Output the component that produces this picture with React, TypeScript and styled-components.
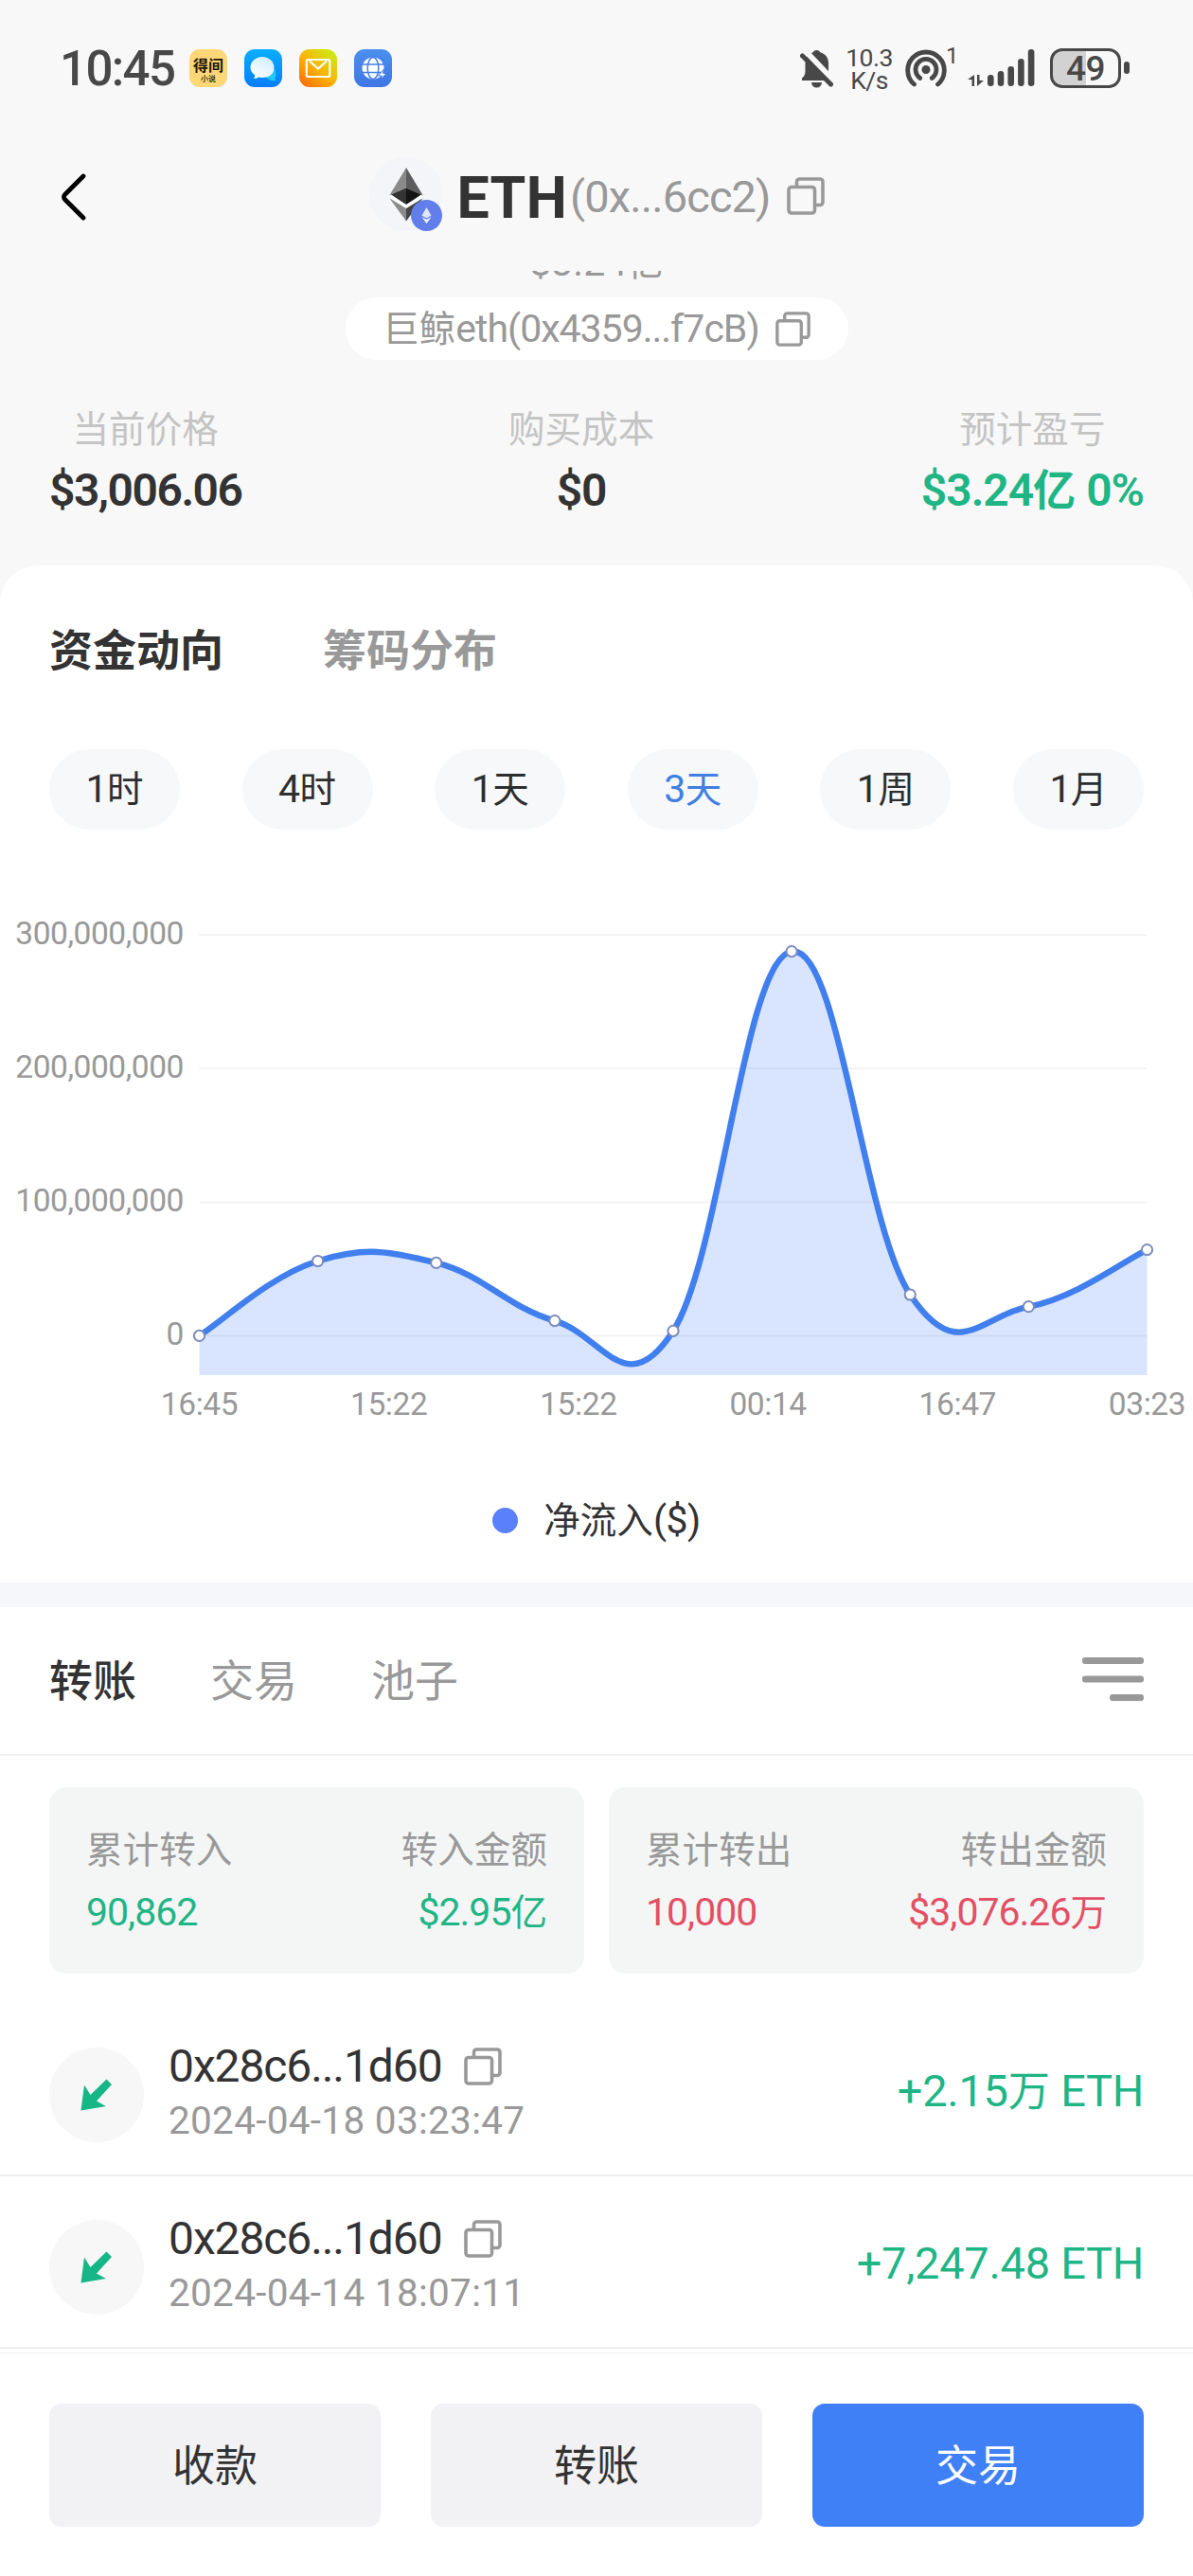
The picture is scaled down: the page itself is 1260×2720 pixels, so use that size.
import React from "react";
import styled, { createGlobalStyle } from "styled-components";

const GlobalStyle = createGlobalStyle`
  * { box-sizing: border-box; }
  body {
    margin: 0;
    background: #f8f8f8;
    font-family: Roboto, "Noto Sans CJK SC", sans-serif;
    color: #333;
    -webkit-font-smoothing: antialiased;
  }
`;

const Screen = styled.div`
  width: 1260px;
  height: 2720px;
  overflow: hidden;
  display: flex;
  flex-direction: column;
`;

interface TextProps {
  $size: number;
  $color?: string;
  $weight?: number;
  $track?: number;
}

const Text = styled.span<TextProps>`
  font-size: ${(p) => p.$size}px;
  line-height: 1.2;
  color: ${(p) => p.$color ?? "#333"};
  font-weight: ${(p) => p.$weight ?? 400};
  letter-spacing: ${(p) => p.$track ?? 0}px;
  white-space: nowrap;
`;

const Han = styled.span`
  font-size: 0.94em;
  line-height: 1;
  letter-spacing: 0;
`;

/* Status bar */

const StatusBar = styled.div`
  flex: none;
  height: 143px;
  padding: 0 67px 0 63px;
  display: flex;
  align-items: center;
  justify-content: space-between;
`;

const StatusGroup = styled.div<{ $gap: number }>`
  display: flex;
  align-items: center;
  gap: ${(p) => p.$gap}px;
`;

const Clock = styled(Text)`
  width: 119px;
  padding-top: 3px;
`;

const AppBadge = styled.div`
  width: 40px;
  height: 40px;
  border-radius: 11px;
  background: #ffd777;
  display: flex;
  flex-direction: column;
  align-items: center;
  padding-top: 8px;
  color: #1d1503;
  font-family: "Noto Sans CJK SC", sans-serif;
`;

const BadgeTitle = styled.span`
  font-size: 16px;
  font-weight: 700;
  line-height: 17px;
`;

const BadgeSub = styled.span`
  font-size: 8px;
  font-weight: 500;
  line-height: 11px;
`;

const Speed = styled.div`
  width: 50px;
  display: flex;
  flex-direction: column;
  align-items: center;
  font-size: 26.500px;
  letter-spacing: -0.5px;
  line-height: 24px;
  color: #484848;
  margin: 2px 13px 0 12px;
`;

const HotspotCount = styled.span`
  font-size: 24px;
  line-height: 24px;
  color: #484848;
  align-self: flex-start;
  margin: 0 14px 0 -1px;
  width: 9px;
`;

const Battery = styled.div`
  width: 75px;
  height: 42px;
  border: 3.5px solid #484848;
  border-radius: 13px;
  background: linear-gradient(90deg, #d2d2d2 51%, #f8f8f8 51%);
  display: flex;
  align-items: center;
  justify-content: center;
  font-size: 37px;
  letter-spacing: -0.5px;
  line-height: 36px;
  font-weight: 500;
  color: #484848;
  margin-left: 15px;
  padding-top: 3px;
`;

const BatteryNub = styled.div`
  width: 6px;
  height: 13px;
  border-radius: 3px;
  background: #484848;
  margin-left: 3px;
`;

/* Header */

const Header = styled.header`
  flex: none;
  height: 143px;
  padding: 0 63px 13px;
  display: grid;
  grid-template-columns: 1fr auto 1fr;
  align-items: center;
`;

const TokenTitle = styled.div`
  display: flex;
  align-items: center;
`;

const TokenName = styled(Text)`
  margin: 4px 3px 0 11px;
`;

const TokenIcon = styled.svg`
  margin-top: -7px;
`;

const TitleCopy = styled.div`
  display: flex;
  margin-left: 17px;
  margin-top: -3px;
`;

const ScrolledTotal = styled.div`
  flex: none;
  height: 12px;
  overflow: hidden;
  display: flex;
  justify-content: center;
  align-items: flex-end;
  margin-bottom: 16px;
`;

const TotalText = styled(Text)`
  line-height: 1;
`;

const AddressPill = styled.div`
  flex: none;
  align-self: center;
  width: 531px;
  height: 66px;
  border-radius: 33px;
  background: #fff;
  display: flex;
  align-items: center;
  justify-content: center;
  gap: 17px;
  padding-top: 1px;
`;

const Stats = styled.section`
  flex: none;
  height: 217px;
  padding: 44px 52px 0;
  display: flex;
  justify-content: space-between;
`;

const Stat = styled.div`
  display: flex;
  flex-direction: column;
  align-items: center;
`;

const StatLabel = styled.span`
  font-size: 38.6px;
  line-height: 60px;
  color: #c4c4c4;
`;

const StatValue = styled(Text)`
  line-height: 68px;
`;

/* Flow panel */

const Panel = styled.section`
  flex: none;
  height: 1074px;
  background: #fff;
  border-radius: 40px 40px 0 0;
  display: flex;
  flex-direction: column;
`;

const SectionTabs = styled.nav`
  display: flex;
  gap: 105px;
  padding: 55px 52px 0;
`;

const SectionTab = styled.span<{ $active?: boolean }>`
  font-size: 46px;
  line-height: 70px;
  font-weight: 700;
  color: ${(p) => (p.$active ? "#333" : "#999")};
`;

const Ranges = styled.div`
  display: flex;
  justify-content: space-between;
  padding: 0 52px;
  margin-top: 69px;
`;

const Range = styled.button<{ $active?: boolean }>`
  width: 138px;
  height: 85px;
  border: 0;
  padding: 0;
  border-radius: 43px;
  background: #f6f8fa;
  font: 400 41px/85px Roboto, "Noto Sans CJK SC", sans-serif;
  letter-spacing: -0.5px;
  color: ${(p) => (p.$active ? "#417fe0" : "#2e2e2e")};
`;

const Chart = styled.svg`
  display: block;
  margin-top: 54px;
  text {
    font-family: Roboto, sans-serif;
    font-size: 33.5px;
    fill: #999;
  }
`;

const Legend = styled.div`
  display: flex;
  justify-content: center;
  align-items: center;
  gap: 27px;
  margin-top: 71px;
`;

const LegendDot = styled.span`
  width: 27px;
  height: 27px;
  border-radius: 50%;
  background: #5b80fb;
`;

/* Transfers */

const Divider = styled.div`
  flex: none;
  height: 26px;
  background: #f6f7fb;
`;

const Records = styled.section`
  flex: 1;
  background: #fff;
`;

const RecordHeader = styled.div`
  height: 157px;
  padding: 0 52px;
  display: flex;
  align-items: center;
  justify-content: space-between;
  border-bottom: 2px solid #f0f0f0;
`;

const RecordTabs = styled.nav`
  display: flex;
  gap: 78px;
`;

const RecordTab = styled.span<{ $active?: boolean }>`
  font-size: 46px;
  line-height: 60px;
  font-weight: ${(p) => (p.$active ? 500 : 400)};
  color: ${(p) => (p.$active ? "#333" : "#999")};
`;

const FilterButton = styled.div`
  display: flex;
  padding-bottom: 3px;
`;

const Totals = styled.div`
  display: flex;
  gap: 26px;
  padding: 33px 52px 0;
  margin-bottom: 32px;
`;

const TotalCard = styled.div`
  flex: 1;
  height: 197px;
  border-radius: 18px;
  background: #f4f6f6;
  padding: 35px 39px 0;
  display: flex;
  justify-content: space-between;
`;

const TotalCell = styled.div<{ $end?: boolean }>`
  display: flex;
  flex-direction: column;
  align-items: ${(p) => (p.$end ? "flex-end" : "flex-start")};
`;

const TotalLabel = styled.span`
  font-size: 38.6px;
  line-height: 64px;
  color: #999;
`;

const TotalValue = styled(Text)`
  line-height: 67px;
`;

const TransferRow = styled.div`
  height: 182px;
  padding: 11px 52px 0;
  display: flex;
  align-items: center;
  border-bottom: 2px solid #eee;
`;

const DirectionIcon = styled.div`
  width: 100px;
  height: 100px;
  border-radius: 50%;
  background: #f7f7f7;
  display: flex;
  align-items: center;
  justify-content: center;
  margin-right: 26px;
`;

const TransferInfo = styled.div`
  flex: 1;
  display: flex;
  flex-direction: column;
  margin-top: -6px;
`;

const AddressLine = styled.div`
  display: flex;
  align-items: center;
  gap: 23px;
  height: 57px;
  margin-bottom: 4px;
`;

const Amount = styled(Text)`
  margin-top: -7px;
`;

/* Bottom actions */

const ActionBar = styled.footer`
  flex: none;
  height: 237px;
  border-top: 3px solid #f8f8f8;
  background: #fff;
  padding: 52px 52px 0;
  display: flex;
  gap: 53px;
`;

const Action = styled.button<{ $primary?: boolean }>`
  flex: 1;
  height: 130px;
  border: 0;
  border-radius: 13px;
  padding: 0 0 6px;
  background: ${(p) => (p.$primary ? "#4080f6" : "#f2f2f4")};
  color: ${(p) => (p.$primary ? "#fff" : "#333")};
  font: 400 45px/1 "Noto Sans CJK SC", sans-serif;
`;

const CopyIcon = ({ size = 40, width = 3.6 }: { size?: number; width?: number }) => (
  <svg width={size} height={size} viewBox="0 0 40 40" fill="none" stroke="#999" strokeWidth={width}>
    <rect x="2" y="10.5" width="27.5" height="27.5" rx="3" />
    <path d="M10.500 10V5a3 3 0 0 1 3-3H35a3 3 0 0 1 3 3v21.500a3 3 0 0 1-3 3h-5" />
  </svg>
);

const BackIcon = () => (
  <svg width="28" height="50" viewBox="0 0 28 50" fill="none" stroke="#000" strokeWidth="4.8" strokeLinecap="round" strokeLinejoin="round">
    <path d="M25 3 5.500 22.500Q3.500 25 5.500 27.500L25 47" />
  </svg>
);

const EthIcon = () => (
  <TokenIcon width="82" height="80" viewBox="0 0 82 80">
    <circle cx="40" cy="40" r="39" fill="#f3f5f9" />
    <path d="M40 12 22.500 41 40 33.500z" fill="#8a8a8a" />
    <path d="M40 12 57.500 41 40 33.500z" fill="#5c5c5c" />
    <path d="M22.500 41 40 33.500V51z" fill="#343434" />
    <path d="M57.500 41 40 33.500V51z" fill="#151515" />
    <path d="M22.500 44.500 40 55v13.500z" fill="#8a8a8a" />
    <path d="M57.500 44.500 40 55v13.500z" fill="#454545" />
    <path d="M23 41.500 40 53l17-11.500" fill="none" stroke="#fff" strokeWidth="3" />
    <circle cx="61.500" cy="62.500" r="16.500" fill="#627eea" />
    <path d="M61.500 54 56.500 62.500 61.500 65.500 66.500 62.500z" fill="#dfe5fb" />
    <path d="M56.500 64 61.500 71 66.500 64 61.500 67z" fill="#fff" />
  </TokenIcon>
);

const MessageBadge = () => (
  <svg width="40" height="40" viewBox="0 0 40 40">
    <defs>
      <linearGradient id="msg" x1="0" y1="0" x2="0" y2="1">
        <stop offset="0" stopColor="#0aaefc" />
        <stop offset="1" stopColor="#077dfb" />
      </linearGradient>
      <linearGradient id="bubble" x1="0" y1="1" x2="0.6" y2="0">
        <stop offset="0" stopColor="#fff" />
        <stop offset="1" stopColor="#d5efff" />
      </linearGradient>
    </defs>
    <rect width="40" height="40" rx="11" fill="url(#msg)" />
    <path d="M22 28c5 0 9-3 10-8 1.500 4 2 8 .5 11l.5 2c-4 1-9-1-11-5z" fill="#20c8f8" />
    <path d="M19 8c7 0 12.500 5 12.500 11.500S26 30 19 30c-1.500 0-3-.2-4-.5-1.500 1.200-3.500 1.500-5 1.500 1-1.200 1.300-2.500 1-4C8 25 6.500 22.500 6.500 19 6.500 13 12 8 19 8z" fill="url(#bubble)" />
  </svg>
);

const MailBadge = () => (
  <svg width="40" height="40" viewBox="0 0 40 40">
    <defs>
      <linearGradient id="mail" x1="0.1" y1="1" x2="0.9" y2="0">
        <stop offset="0" stopColor="#ff6a00" />
        <stop offset="0.45" stopColor="#fdb004" />
        <stop offset="1" stopColor="#c8f016" />
      </linearGradient>
    </defs>
    <rect width="40" height="40" rx="11" fill="url(#mail)" />
    <rect x="7.800" y="11" width="24.500" height="18" rx="1.500" fill="none" stroke="#fff" strokeWidth="2.200" />
    <path d="M11 12.500 20 20.500l9-8" fill="none" stroke="#fff" strokeWidth="2.200" />
  </svg>
);

const GlobeBadge = () => (
  <svg width="40" height="40" viewBox="0 0 40 40">
    <defs>
      <linearGradient id="globe" x1="0" y1="0" x2="0" y2="1">
        <stop offset="0" stopColor="#4a90ee" />
        <stop offset="1" stopColor="#3f76e4" />
      </linearGradient>
    </defs>
    <rect width="40" height="40" rx="11" fill="url(#globe)" />
    <circle cx="20" cy="20" r="11.500" fill="#fff" />
    <g fill="none" stroke="#447fe8" strokeWidth="1.500">
      <ellipse cx="20" cy="20" rx="5.800" ry="11.500" />
      <path d="M8 16h24M8 24.500h24" />
    </g>
    <path d="M31.500 21l-6 7h4l-1.500 4 6-6.500h-3.500z" fill="#fff" stroke="#447fe8" strokeWidth="1" />
  </svg>
);

const MutedBell = () => (
  <svg width="36" height="42" viewBox="0 0 36 42">
    <path d="M17.500 2c1.500 0 3 .8 3.800 2.300C27 6 30 10 30 16v8c0 3 1 5 3.500 8v2H2v-2.500c2.500-2 3.500-4 3.500-7.500v-8C5.500 10 8.500 6 13.700 4.300 14.500 2.800 16 2 17.500 2z" fill="#484848" />
    <path d="M12 36h11a5.500 5.500 0 0 1-11 0z" fill="#484848" />
    <path d="M3.500 0.500 36 35" stroke="#f8f8f8" strokeWidth="6" />
    <path d="M0 0h8L4 12 0 14z" fill="#f8f8f8" />
    <path d="M2.500 8 32.500 38" stroke="#484848" strokeWidth="5" strokeLinecap="round" />
  </svg>
);

const Hotspot = () => (
  <svg width="44" height="42" viewBox="0 0 44 42" fill="none" stroke="#484848" strokeWidth="4.800" strokeLinecap="round">
    <circle cx="22" cy="22.500" r="4.500" fill="#484848" stroke="none" />
    <path d="M9.500 38A19.300 19.300 0 1 1 34.500 38" />
    <path d="M15.800 31.500A11 11 0 1 1 28.200 31.500" />
  </svg>
);

const BAR_TOPS = [28, 24, 19, 11, 1];

const Signal = () => (
  <svg width="72" height="41" viewBox="0 0 72 41" fill="#484848">
    <path d="M7 28v12H4.500v-7H0zM10 28h2.500v6H17l-7 6z" />
    {BAR_TOPS.map((top, i) => (
      <rect key={i} x={21 + i * 10.7} y={top} width="6.600" height={40 - top} rx="3.200" />
    ))}
  </svg>
);

const FilterIcon = () => (
  <svg width="65" height="46" viewBox="0 0 65 46" fill="#999">
    <rect width="65" height="7" rx="3" />
    <rect y="19.500" width="65" height="7" rx="3" />
    <rect x="29" y="39" width="36" height="7" rx="3" />
  </svg>
);

const InArrow = () => (
  <svg width="34" height="34" viewBox="0 0 34 34" fill="#17b686">
    <path d="M27.500 0.500 33 6 17 23.500 27 29 0.500 33.500 4 6.500 10.500 17z" />
  </svg>
);

/* Chart geometry */

interface Point {
  x: number;
  y: number;
}

const CHART_TOP = 930;
const PLOT_LEFT = 210.5;
const PLOT_RIGHT = 1211.5;
const PLOT_BOTTOM = 1452 - CHART_TOP;
const TENSION = 0.2;

const LEVELS = [1410.4, 1331.5, 1333.4, 1394.6, 1405.3, 1004.6, 1367, 1379.7, 1319.6];
const POINTS: Point[] = LEVELS.map((y, i) => ({
  x: PLOT_LEFT + ((PLOT_RIGHT - PLOT_LEFT) / (LEVELS.length - 1)) * i,
  y: y - CHART_TOP,
}));

const Y_TICKS = [
  { label: "300,000,000", y: 57.3 },
  { label: "200,000,000", y: 198.3 },
  { label: "100,000,000", y: 339.4 },
  { label: "0", y: 480.4 },
];
const X_TICKS = ["16:45", "15:22", "15:22", "00:14", "16:47", "03:23"];

const curve = (pts: Point[]): string => {
  const at = (i: number) => pts[Math.max(0, Math.min(pts.length - 1, i))];
  return pts.slice(1).reduce((d, end, i) => {
    const start = pts[i];
    const before = at(i - 1);
    const after = at(i + 2);
    const c1x = start.x + (end.x - before.x) * TENSION;
    const c1y = start.y + (end.y - before.y) * TENSION;
    const c2x = end.x - (after.x - start.x) * TENSION;
    const c2y = end.y - (after.y - start.y) * TENSION;
    return `${d}C${c1x} ${c1y} ${c2x} ${c2y} ${end.x} ${end.y}`;
  }, `M${pts[0].x} ${pts[0].y}`);
};

const LINE = curve(POINTS);

const FlowChart = () => (
  <Chart width="1260" height="580" viewBox="0 0 1260 580">
    {Y_TICKS.map((t) => (
      <g key={t.label}>
        <line x1={PLOT_LEFT} x2={PLOT_RIGHT} y1={t.y} y2={t.y} stroke="#f0f0f0" strokeWidth="1.500" />
        <text x="194" y={t.y + 9.5} textAnchor="end" letterSpacing="-0.45">{t.label}</text>
      </g>
    ))}
    <path d={`${LINE}L${PLOT_RIGHT} ${PLOT_BOTTOM}L${PLOT_LEFT} ${PLOT_BOTTOM}Z`} fill="rgba(65,127,255,0.2)" />
    <path d={LINE} fill="none" stroke="#417fee" strokeWidth="6.400" />
    {POINTS.map((p) => (
      <circle key={p.x} cx={p.x} cy={p.y} r="5.600" fill="#fff" stroke="#7d8bbd" strokeWidth="2" />
    ))}
    {X_TICKS.map((label, i) => (
      <text key={i} x={PLOT_LEFT + ((PLOT_RIGHT - PLOT_LEFT) / 5) * i} y="563.500" textAnchor="middle" letterSpacing="-0.4">{label}</text>
    ))}
  </Chart>
);

const RANGES = [
  { n: 1, unit: "时" },
  { n: 4, unit: "时" },
  { n: 1, unit: "天" },
  { n: 3, unit: "天", active: true },
  { n: 1, unit: "周" },
  { n: 1, unit: "月" },
];

const GREEN = "#1fb585";
const RED = "#e34f64";

const TRANSFERS = [
  { address: "0x28c6...1d60", time: "2024-04-18 03:23:47", amount: <>+2.15<Han>万</Han> ETH</> },
  { address: "0x28c6...1d60", time: "2024-04-14 18:07:11", amount: <>+7,247.48 ETH</> },
];

export default function App() {
  return (
    <Screen>
      <GlobalStyle />
      <StatusBar>
        <StatusGroup $gap={18}>
          <Clock $size={51} $color="#484848" $weight={500} $track={-1.6}>10:45</Clock>
          <AppBadge>
            <BadgeTitle>得间</BadgeTitle>
            <BadgeSub>小说</BadgeSub>
          </AppBadge>
          <MessageBadge />
          <MailBadge />
          <GlobeBadge />
        </StatusGroup>
        <StatusGroup $gap={0}>
          <MutedBell />
          <Speed>
            <span>10.3</span>
            <span>K/s</span>
          </Speed>
          <Hotspot />
          <HotspotCount>1</HotspotCount>
          <Signal />
          <Battery>49</Battery>
          <BatteryNub />
        </StatusGroup>
      </StatusBar>

      <Header>
        <BackIcon />
        <TokenTitle>
          <EthIcon />
          <TokenName $size={61} $weight={700} $track={0.3}>ETH</TokenName>
          <Text $size={47} $color="#999" $track={-0.9}>(0x...6cc2)</Text>
          <TitleCopy><CopyIcon /></TitleCopy>
        </TokenTitle>
      </Header>

      <ScrolledTotal>
        <TotalText $size={41} $color="#999">$3.24<Han>亿</Han></TotalText>
      </ScrolledTotal>
      <AddressPill>
        <Text $size={41} $color="#999" $track={-1}><Han>巨鲸</Han>eth(0x4359...f7cB)</Text>
        <CopyIcon size={37} />
      </AddressPill>

      <Stats>
        <Stat>
          <StatLabel>当前价格</StatLabel>
          <StatValue $size={48} $weight={600} $track={-1.5}>$3,006.06</StatValue>
        </Stat>
        <Stat>
          <StatLabel>购买成本</StatLabel>
          <StatValue $size={48} $weight={600} $track={-1}>$0</StatValue>
        </Stat>
        <Stat>
          <StatLabel>预计盈亏</StatLabel>
          <StatValue $size={48} $weight={600} $track={-1} $color={GREEN}>$3.24<Han>亿</Han> 0%</StatValue>
        </Stat>
      </Stats>

      <Panel>
        <SectionTabs>
          <SectionTab $active>资金动向</SectionTab>
          <SectionTab>筹码分布</SectionTab>
        </SectionTabs>
        <Ranges>
          {RANGES.map((r) => (
            <Range key={`${r.n}${r.unit}`} $active={r.active}>{r.n}<Han>{r.unit}</Han></Range>
          ))}
        </Ranges>
        <FlowChart />
        <Legend>
          <LegendDot />
          <Text $size={41} $track={-0.5}><Han>净流入</Han>($)</Text>
        </Legend>
      </Panel>

      <Divider />

      <Records>
        <RecordHeader>
          <RecordTabs>
            <RecordTab $active>转账</RecordTab>
            <RecordTab>交易</RecordTab>
            <RecordTab>池子</RecordTab>
          </RecordTabs>
          <FilterButton><FilterIcon /></FilterButton>
        </RecordHeader>
        <Totals>
          <TotalCard>
            <TotalCell>
              <TotalLabel>累计转入</TotalLabel>
              <TotalValue $size={41} $track={-1} $color={GREEN}>90,862</TotalValue>
            </TotalCell>
            <TotalCell $end>
              <TotalLabel>转入金额</TotalLabel>
              <TotalValue $size={41} $track={-1} $color={GREEN}>$2.95<Han>亿</Han></TotalValue>
            </TotalCell>
          </TotalCard>
          <TotalCard>
            <TotalCell>
              <TotalLabel>累计转出</TotalLabel>
              <TotalValue $size={41} $track={-1} $color={RED}>10,000</TotalValue>
            </TotalCell>
            <TotalCell $end>
              <TotalLabel>转出金额</TotalLabel>
              <TotalValue $size={41} $track={-1} $color={RED}>$3,076.26<Han>万</Han></TotalValue>
            </TotalCell>
          </TotalCard>
        </Totals>
        {TRANSFERS.map((t) => (
          <TransferRow key={t.time}>
            <DirectionIcon><InArrow /></DirectionIcon>
            <TransferInfo>
              <AddressLine>
                <Text $size={48} $track={-1.1}>{t.address}</Text>
                <CopyIcon />
              </AddressLine>
              <Text $size={40.5} $color="#999" $track={0.3}>{t.time}</Text>
            </TransferInfo>
            <Amount $size={47} $track={-0.3} $color={GREEN}>{t.amount}</Amount>
          </TransferRow>
        ))}
      </Records>

      <ActionBar>
        <Action>收款</Action>
        <Action>转账</Action>
        <Action $primary>交易</Action>
      </ActionBar>
    </Screen>
  );
}
